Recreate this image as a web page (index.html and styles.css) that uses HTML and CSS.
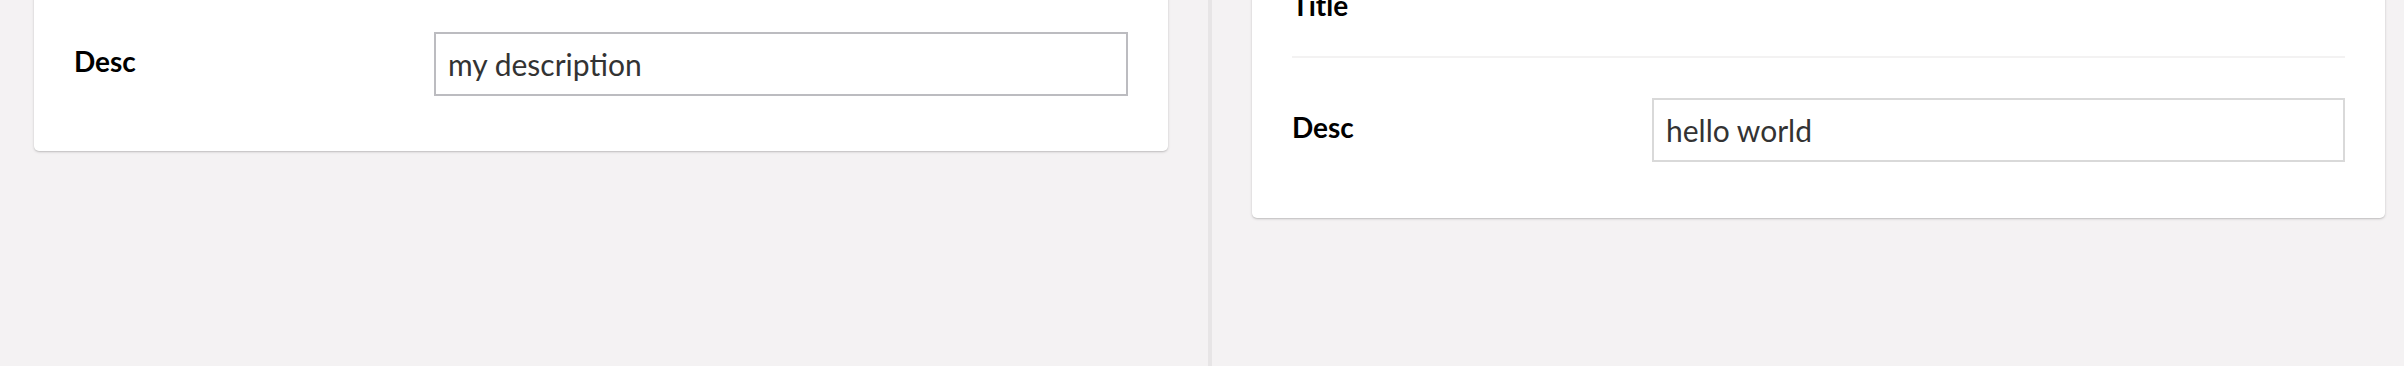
FILE: index.html
```html
<!DOCTYPE html>
<html lang="en">
<head>
<meta charset="utf-8">
<title>Compare</title>
<link rel="stylesheet" href="styles.css">
</head>
<body>
<div class="split">
  <section class="pane pane-left">
    <div class="card card-left">
      <div class="row row-title">
        <div class="label">Title</div>
        <div class="value"></div>
      </div>
      <div class="row">
        <div class="label">Desc</div>
        <div class="value"><input class="field field-hover" type="text" value="my description"></div>
      </div>
    </div>
  </section>
  <div class="separator"></div>
  <section class="pane pane-right">
    <div class="card card-right">
      <div class="row row-title">
        <div class="label">Title</div>
        <div class="value"></div>
      </div>
      <div class="row">
        <div class="label">Desc</div>
        <div class="value"><input class="field" type="text" value="hello world"></div>
      </div>
    </div>
  </section>
</div>
</body>
</html>
```
FILE: styles.css
```css
html, body {
  margin: 0;
  padding: 0;
  height: 366px;
  overflow: hidden;
  background: #f4f2f3;
  font-family: Lato, "Open Sans", "Liberation Sans", sans-serif;
}

.split {
  display: grid;
  grid-template-columns: 1208px 4px 1fr;
  height: 366px;
}

.pane {
  overflow: hidden;
  height: 366px;
}

.pane-left {
  padding: 0 40px 0 34px;
}

.pane-right {
  padding: 0 19px 0 40px;
}

.separator {
  background: #e7e5e6;
}

.card {
  background: #ffffff;
  border-radius: 5px;
  box-shadow: 0 1px 3px rgba(0, 0, 0, 0.16), 0 1px 1px rgba(0, 0, 0, 0.08);
  padding: 16px 40px 16px;
}

.card-left {
  margin-top: -134px;
  padding-bottom: 15px;
}

.card-right {
  margin-top: -68px;
}

.row {
  display: grid;
  grid-template-columns: 360px 1fr;
  align-items: start;
  padding: 40px 0;
  border-top: 2px solid #f3f2f2;
}

.row-title {
  border-top: none;
  padding-bottom: 34px;
}

.label {
  font-weight: 700;
  font-size: 28px;
  line-height: 34px;
  color: #000;
}

.row .label {
  padding-top: 12px;
}

.row-title .label {
  padding-top: 0;
}

.value {
  min-width: 0;
}

.field {
  display: block;
  box-sizing: border-box;
  width: 100%;
  height: 64px;
  margin: 0;
  padding: 0 12px;
  border: 2px solid #d9d9d9;
  border-radius: 0;
  background: #fff;
  font-family: Lato, "Open Sans", "Liberation Sans", sans-serif;
  font-size: 30px;
  color: #333;
  outline: none;
}

.field-hover {
  border-color: #bcbcc0;
}
```
